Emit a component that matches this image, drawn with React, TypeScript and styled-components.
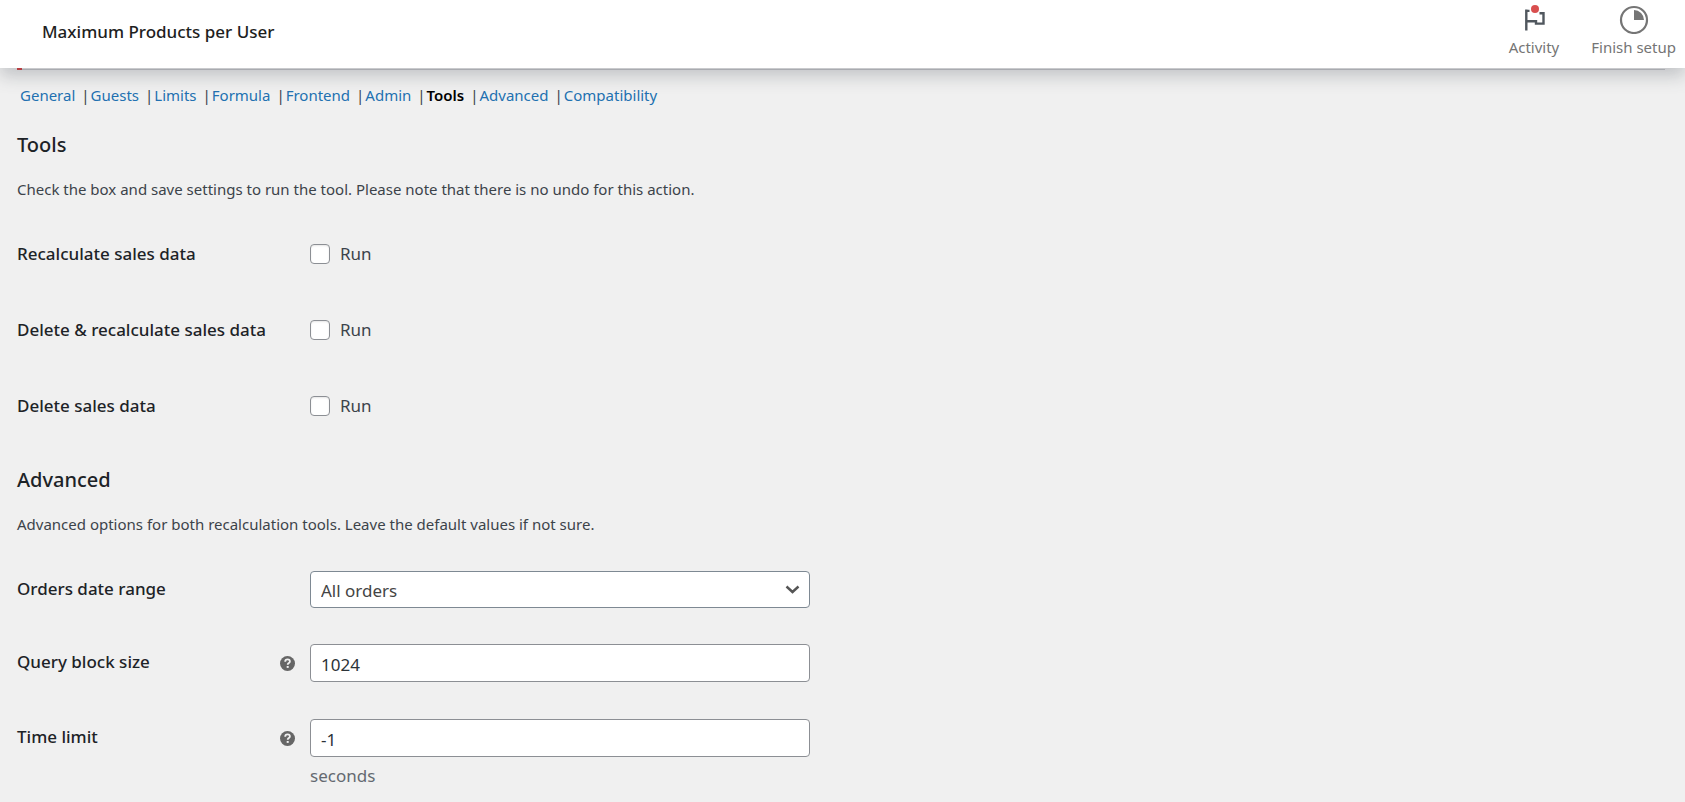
import React from "react";
import styled, { createGlobalStyle } from "styled-components";

const GlobalStyle = createGlobalStyle`
  *, *::before, *::after { box-sizing: border-box; }
  body {
    margin: 0;
    background: #f0f0f0;
    color: #3c434a;
    font-family: "Segoe UI", "Noto Sans", "Open Sans", sans-serif;
    font-size: 15px;
    line-height: 24px;
  }
`;

const Header = styled.header`
  position: relative;
  z-index: 1;
  display: flex;
  justify-content: space-between;
  height: 68px;
  padding-left: 42px;
  background: #fff;
  box-shadow: 0 8px 16px rgba(85, 93, 102, 0.3);
`;

const PageTitle = styled.h1`
  margin: 0;
  padding-top: 20px;
  color: #1e1e1e;
  font-size: 17px;
  font-weight: 500;
  line-height: 24px;
`;

const Actions = styled.div`
  display: flex;
  gap: 16px;
  padding-right: 1px;
`;

const ActionButton = styled.button`
  display: flex;
  flex-direction: column;
  align-items: center;
  gap: 1px;
  padding: 4px 8px 0;
  border: 0;
  background: none;
  color: #757575;
  font: inherit;
  line-height: 24px;
  cursor: pointer;
`;

const Notice = styled.div`
  height: 2px;
  margin: 0 20px 0 17px;
  border-left: 5px solid #d63638;
  box-shadow: inset 0 -1px #c3c4c7;
`;

const Main = styled.main`
  padding: 0 17px;
`;

const Tabs = styled.ul`
  display: flex;
  margin: 0;
  padding: 13px 3px 0;
  list-style: none;
`;

const Tab = styled.li`
  &:not(:last-child)::after {
    content: "|";
    margin: 0 1px 0 6px;
  }
`;

const TabLink = styled.a<{ $current?: boolean }>`
  color: ${(p) => (p.$current ? "#000" : "#2271b1")};
  font-weight: ${(p) => (p.$current ? 600 : 400)};
  text-decoration: none;
`;

const SectionTitle = styled.h2<{ $top: number }>`
  margin: 0;
  padding-top: ${(p) => p.$top}px;
  color: #1d2327;
  font-size: 20px;
  font-weight: 500;
  line-height: 28px;
`;

const Description = styled.p`
  margin: 0;
  padding: 18px 0 0;
`;

const Rows = styled.div`
  padding-top: 35px;
`;

const Row = styled.div<{ $height: number }>`
  display: grid;
  grid-template-columns: 263px 30px minmax(0, 500px);
  align-items: start;
  min-height: ${(p) => p.$height}px;
`;

const RowLabel = styled.label`
  padding-top: 6px;
  color: #1d2327;
  font-size: 17px;
  font-weight: 500;
  white-space: nowrap;
`;

const Tip = styled.span`
  display: flex;
  padding-top: 12px;
`;

const CheckLabel = styled.label`
  grid-column: 3;
  display: flex;
  align-items: center;
  gap: 10px;
  padding-top: 6px;
  font-size: 17px;
`;

const Checkbox = styled.input`
  appearance: none;
  width: 20px;
  height: 20px;
  margin: 0;
  border: 1px solid #8c8f94;
  border-radius: 4px;
  background: #fff;
  box-shadow: inset 0 1px 2px rgba(0, 0, 0, 0.1);
`;

const Field = styled.div`
  grid-column: 3;
`;

const TextInput = styled.input`
  display: block;
  width: 100%;
  height: 38px;
  padding: 2px 10px 0;
  border: 1px solid #8c8f94;
  border-radius: 4px;
  background: #fff;
  color: #2c3338;
  font: inherit;
  font-size: 17px;
`;

const SelectWrap = styled.div`
  display: grid;
  align-items: center;
  & > * { grid-area: 1 / 1; }
  & > svg { justify-self: end; margin-right: 10px; pointer-events: none; }
`;

const Select = styled.select`
  appearance: none;
  width: 100%;
  height: 37px;
  padding: 2px 10px 0;
  border: 1px solid #7e8993;
  border-radius: 4px;
  background: #fff;
  color: #444;
  font: inherit;
  font-size: 17px;
`;

const Unit = styled.div`
  padding-top: 7px;
  color: #646970;
  font-size: 17px;
`;

const tabs = ["General", "Guests", "Limits", "Formula", "Frontend", "Admin", "Tools", "Advanced", "Compatibility"];

const tools = [
  { id: "recalculate", label: "Recalculate sales data" },
  { id: "delete-recalculate", label: "Delete & recalculate sales data" },
  { id: "delete", label: "Delete sales data" },
];

const FlagIcon = () => (
  <svg width="30" height="30" viewBox="0 0 30 30" fill="none" aria-hidden="true">
    <path d="M7.300 5.500v21M7.300 6.900H10.500M7.300 17.200h9.700v2.400h7.500V9.200h-4" stroke="#50575e" strokeWidth="2.400" />
    <circle cx="16" cy="5" r="4" fill="#d94f4f" />
  </svg>
);

const ProgressIcon = () => (
  <svg width="30" height="30" viewBox="0 0 30 30" fill="none" aria-hidden="true">
    <circle cx="15" cy="16" r="13" stroke="#757575" strokeWidth="2.200" />
    <path d="M15 6a10 10 0 0 1 10 10H15z" fill="#757575" />
  </svg>
);

const HelpIcon = () => (
  <svg width="15" height="15" viewBox="0 0 15 15" role="img" aria-label="Help">
    <circle cx="7.5" cy="7.5" r="7.500" fill="#666" />
    <path d="M5.200 5.700c0-1.500 1-2.300 2.400-2.300s2.300.8 2.300 2c0 1.700-2.100 1.600-2.200 3.300" fill="none" stroke="#f0f0f0" strokeWidth="1.800" />
    <rect x="6.700" y="10" width="2" height="1.900" fill="#f0f0f0" />
  </svg>
);

const Chevron = () => (
  <svg width="15" height="9" viewBox="0 0 15 9" fill="none" aria-hidden="true">
    <path d="M1.500 1.500l6 5.500 6-5.500" stroke="#555" strokeWidth="2.400" />
  </svg>
);

export default function App() {
  return (
    <>
      <GlobalStyle />
      <Header>
        <PageTitle>Maximum Products per User</PageTitle>
        <Actions>
          <ActionButton type="button"><FlagIcon />Activity</ActionButton>
          <ActionButton type="button"><ProgressIcon />Finish setup</ActionButton>
        </Actions>
      </Header>
      <Notice />
      <Main>
        <nav>
          <Tabs>
            {tabs.map((t) => (
              <Tab key={t}>
                <TabLink href={`#${t.toLowerCase()}`} $current={t === "Tools"}>{t}</TabLink>
              </Tab>
            ))}
          </Tabs>
        </nav>
        <SectionTitle $top={24}>Tools</SectionTitle>
        <Description>Check the box and save settings to run the tool. Please note that there is no undo for this action.</Description>
        <Rows>
          {tools.map((t) => (
            <Row key={t.id} $height={76}>
              <RowLabel htmlFor={t.id}>{t.label}</RowLabel>
              <CheckLabel><Checkbox type="checkbox" id={t.id} />Run</CheckLabel>
            </Row>
          ))}
        </Rows>
        <SectionTitle $top={2}>Advanced</SectionTitle>
        <Description>Advanced options for both recalculation tools. Leave the default values if not sure.</Description>
        <Rows>
          <Row $height={73}>
            <RowLabel htmlFor="range">Orders date range</RowLabel>
            <Field>
              <SelectWrap>
                <Select id="range"><option>All orders</option></Select>
                <Chevron />
              </SelectWrap>
            </Field>
          </Row>
          <Row $height={75}>
            <RowLabel htmlFor="block">Query block size</RowLabel>
            <Tip><HelpIcon /></Tip>
            <Field><TextInput id="block" type="text" defaultValue="1024" /></Field>
          </Row>
          <Row $height={75}>
            <RowLabel htmlFor="limit">Time limit</RowLabel>
            <Tip><HelpIcon /></Tip>
            <Field>
              <TextInput id="limit" type="text" defaultValue="-1" />
              <Unit>seconds</Unit>
            </Field>
          </Row>
        </Rows>
      </Main>
    </>
  );
}
